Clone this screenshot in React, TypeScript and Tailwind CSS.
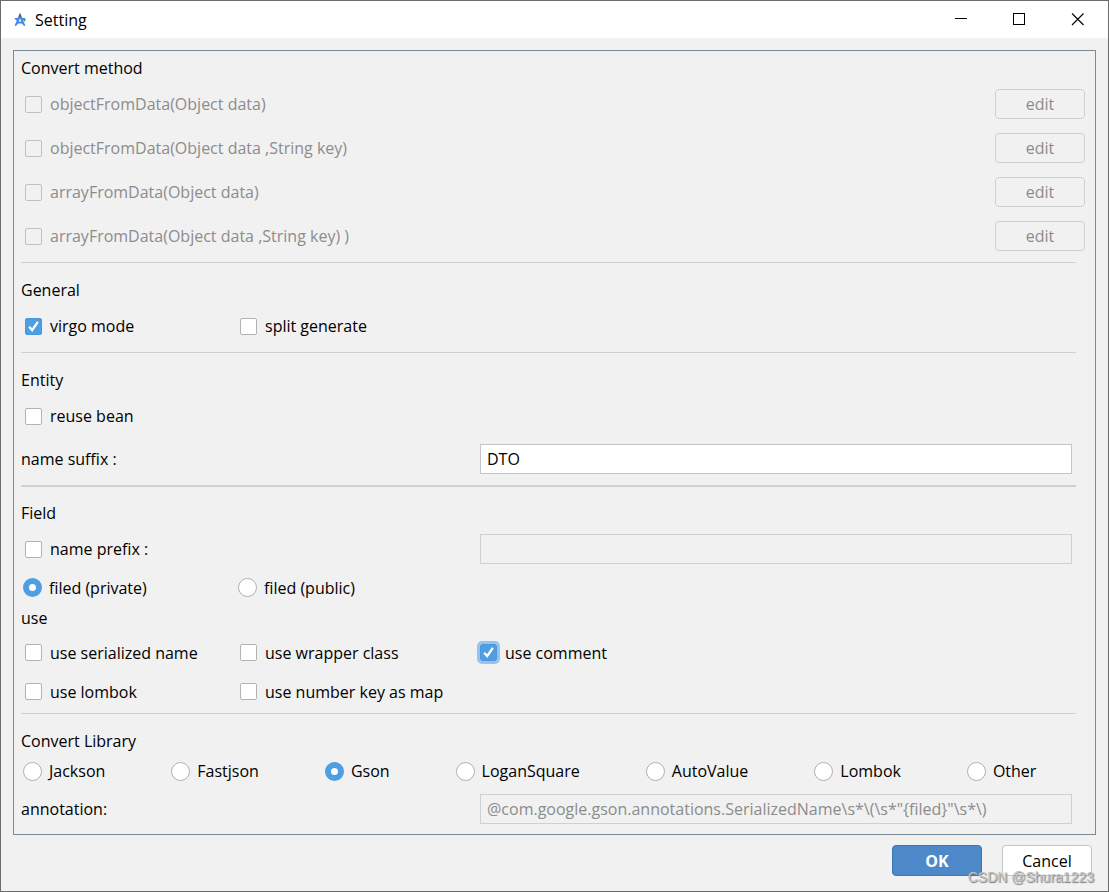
import { useState } from "react";

const methods = [
    "objectFromData(Object data)",
    "objectFromData(Object data ,String key)",
    "arrayFromData(Object data)",
    "arrayFromData(Object data ,String key) )",
];

const libraries = ["Jackson", "Fastjson", "Gson", "LoganSquare", "AutoValue", "Lombok", "Other"];

type CheckProps = { label: string; checked?: boolean; disabled?: boolean; focused?: boolean };

function Check({ label, checked, disabled, focused }: CheckProps) {
    return (
        <label className={`flex items-center gap-2 pl-1 whitespace-nowrap ${disabled ? "text-[#8c8c8c]" : "text-black"}`}>
            <span className="relative block size-[17px] shrink-0">
                <input
                    type="checkbox"
                    defaultChecked={checked}
                    disabled={disabled}
                    className={`peer block size-[17px] appearance-none rounded-[2px] border border-[#b3b3b3] bg-white checked:border-[#4b97d9] checked:bg-[#4f9ee3] disabled:border-[#c0c0c0] disabled:bg-transparent ${
                        focused ? "outline-3 outline-[#97c3f3]" : "outline-none"
                    }`}
                />
                <svg viewBox="0 0 18 18" className="pointer-events-none absolute inset-0 hidden size-[17px] peer-checked:block">
                    <path d="M4.4 9.3 7.6 12.8 13.6 4.2" fill="none" stroke="#fff" strokeWidth="2.4" />
                </svg>
            </span>
            {label}
        </label>
    );
}

function Radio({ name, label, checked }: { name: string; label: string; checked?: boolean }) {
    return (
        <label className="flex items-center gap-[7px] pl-[2px] whitespace-nowrap">
            <input
                type="radio"
                name={name}
                defaultChecked={checked}
                className="block size-[19px] shrink-0 appearance-none rounded-full border border-[#b0b0b0] bg-white outline-none checked:border-[6px] checked:border-[#4f9ee3]"
            />
            {label}
        </label>
    );
}

function Heading({ children }: { children: string }) {
    return <h2 className="h-6 leading-6">{children}</h2>;
}

const inputClass =
    "h-[30px] w-full min-w-0 border border-[#c4c4c4] bg-white px-[6px] outline-none disabled:border-[#d0d0d0] disabled:bg-transparent disabled:text-[#8c8c8c]";

export default function App() {
    const [suffix, setSuffix] = useState("DTO");

    return (
        <main className="relative flex min-h-screen flex-col border border-[#6b6b6b] bg-[#f1f1f1] font-['Open_Sans',sans-serif] text-[16px] leading-6 text-black">
            {/* Title bar */}
            <header className="flex h-[37px] items-center bg-white pr-0.5 pl-[11px]">
                <svg viewBox="0 0 16 16" className="mr-[7px] size-4">
                    <path d="M11 7.2 14 6.8 12.6 10Z" fill="#34a853" />
                    <path d="M2 6.2 6 5.8 7 3.4H9L10 5.8 13.4 6.2 11.2 8.8 13.4 13.4 12 14 9.9 11.4H6.1L4 14 2.6 13.4 4.8 8.8Z" fill="#4285f4" />
                    <path d="M8 6.2 9.3 9.4H6.7Z" fill="#fff" />
                    <path d="M7.2 1.6h1.6v1.2l.8 1.4-.8 1.2H7.2l-.8-1.2.8-1.4Z" fill="#5f6368" />
                </svg>
                <h1 className="flex-1">Setting</h1>
                <button aria-label="Minimize" className="flex h-full w-[58px] items-center justify-center">
                    <svg width="13" height="13" viewBox="0 0 13 13" shapeRendering="crispEdges">
                        <path d="M0 5.5h12" stroke="#000" />
                    </svg>
                </button>
                <button aria-label="Maximize" className="flex h-full w-[58px] items-center justify-center">
                    <svg width="13" height="13" viewBox="0 0 13 13" shapeRendering="crispEdges">
                        <path d="M.5 .5h11v11H.5Z" fill="none" stroke="#000" />
                    </svg>
                </button>
                <button aria-label="Close" className="flex h-full w-[58px] items-center justify-center">
                    <svg width="13" height="13" viewBox="0 0 13 13">
                        <path d="M1 .5 12.5 12M12.5 .5 1 12" stroke="#000" strokeWidth="1.1" />
                    </svg>
                </button>
            </header>

            <div className="mx-3 mt-3 border border-[#7a8a99] pt-[5px] pb-[3px] pl-[7px]">
                {/* Convert method */}
                <section>
                    <Heading>Convert method</Heading>
                    <div className="mt-[2px] pr-[10px]">
                        {methods.map((method) => (
                            <div key={method} className="flex h-11 items-center justify-between">
                                <Check label={method} disabled />
                                <button disabled className="h-[30px] w-[90px] rounded-[4px] border border-[#cfcfcf] text-[#8c8c8c]">
                                    edit
                                </button>
                            </div>
                        ))}
                    </div>
                </section>
                <hr className="mt-1 mr-[19px] mb-[15px] border-[#d0d0d0]" />

                {/* General */}
                <section>
                    <Heading>General</Heading>
                    <div className="mt-[2px] grid h-11 grid-cols-[215px_1fr] items-center">
                        <Check label="virgo mode" checked />
                        <Check label="split generate" />
                    </div>
                </section>
                <hr className="mt-1 mr-[19px] mb-[15px] border-[#d0d0d0]" />

                {/* Entity */}
                <section>
                    <Heading>Entity</Heading>
                    <div className="mt-[2px] flex h-11 items-center">
                        <Check label="reuse bean" />
                    </div>
                    <div className="grid h-[42px] grid-cols-[459px_1fr] items-center pr-[23px]">
                        <label htmlFor="suffix">name suffix :</label>
                        <input id="suffix" value={suffix} onChange={(e) => setSuffix(e.target.value)} className={inputClass} />
                    </div>
                </section>
                <hr className="mt-[5px] mr-[19px] mb-[14px] border-t-2 border-[#d0d0d0]" />

                {/* Field */}
                <section>
                    <Heading>Field</Heading>
                    <div className="mt-[2px] grid h-11 grid-cols-[459px_1fr] items-center pr-[23px]">
                        <Check label="name prefix :" />
                        <input aria-label="name prefix" disabled className={inputClass} />
                    </div>
                    <div className="mb-[2px] grid h-[33px] grid-cols-[215px_1fr] items-center">
                        <Radio name="field" label="filed (private)" checked />
                        <Radio name="field" label="filed (public)" />
                    </div>
                    <Heading>use</Heading>
                    <div className="mt-[3px] grid auto-rows-[39px] grid-cols-[215px_240px_1fr] items-center">
                        <Check label="use serialized name" />
                        <Check label="use wrapper class" />
                        <Check label="use comment" checked focused />
                        <Check label="use lombok" />
                        <Check label="use number key as map" />
                    </div>
                </section>
                <hr className="mt-[2px] mr-[19px] mb-[15px] border-[#d0d0d0]" />

                {/* Convert Library */}
                <section>
                    <Heading>Convert Library</Heading>
                    <div className="mt-[2px] flex h-8 items-center gap-16">
                        {libraries.map((library) => (
                            <Radio key={library} name="library" label={library} checked={library === "Gson"} />
                        ))}
                    </div>
                    <div className="grid h-11 grid-cols-[459px_1fr] items-center pr-[23px]">
                        <label htmlFor="annotation">annotation:</label>
                        <input
                            id="annotation"
                            disabled
                            defaultValue={'@com.google.gson.annotations.SerializedName\\s*\\(\\s*"{filed}"\\s*\\)'}
                            className={inputClass}
                        />
                    </div>
                </section>
            </div>

            <footer className="flex justify-end gap-5 pt-[10px] pr-4 pb-[15px]">
                <button className="h-[31px] w-[90px] rounded-[4px] border border-[#3d75b1] bg-[#4d89c9] font-bold text-white">OK</button>
                <button className="h-[31px] w-[90px] rounded-[4px] border border-[#c4c4c4] bg-white">Cancel</button>
            </footer>

            <span className="pointer-events-none absolute right-[14px] bottom-1 font-['Liberation_Sans',sans-serif] text-[14px] leading-5 text-[#c4c4c4] [text-shadow:1px_1px_1px_#777]">
                CSDN @Shura1223
            </span>
        </main>
    );
}
